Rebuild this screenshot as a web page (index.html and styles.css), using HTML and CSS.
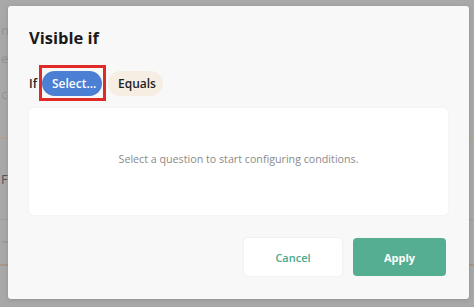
FILE: index.html
```html
<!DOCTYPE html>
<html>
<head>
<meta charset="utf-8">
<link rel="stylesheet" href="styles.css">
</head>
<body>
<div class="page">
  <div class="bg-row bg-r1"><span class="bg-text">n</span></div>
  <div class="bg-row bg-r2"><span class="bg-text">e</span></div>
  <div class="bg-row bg-r3"><span class="bg-text">c</span></div>
  <div class="bg-line bg-l1"></div>
  <div class="bg-row bg-r4"><span class="bg-text dark">F</span></div>
  <div class="bg-line bg-l2"></div>
  <div class="bg-row bg-r5"><span class="bg-text">~</span></div>
  <div class="bg-line bg-l3"></div>
</div>
<div class="modal">
  <h1 class="title">Visible if</h1>
  <div class="cond-row">
    <span class="if-label">If</span>
    <span class="highlight"><button class="pill pill-select">Select...</button></span>
    <button class="pill pill-equals">Equals</button>
  </div>
  <div class="card">
    <p class="empty">Select a question to start configuring conditions.</p>
  </div>
  <div class="actions">
    <button class="btn btn-cancel">Cancel</button>
    <button class="btn btn-apply">Apply</button>
  </div>
</div>
</body>
</html>
```
FILE: styles.css
```css
* { box-sizing: border-box; }
html, body { margin: 0; padding: 0; }
body {
  width: 474px;
  height: 307px;
  overflow: hidden;
  background: #a8a8a8;
  font-family: "Open Sans", "Noto Sans", sans-serif;
  position: relative;
}
.page { padding-top: 20px; }
.bg-row { height: 36px; display: flex; align-items: center; }
.bg-text { color: #939393; font-size: 13px; margin-left: 1px; }
.bg-text.dark { color: #555; }
.bg-r1 { height: 20px; }
.bg-line { height: 2px; background: #b1a294; }
.bg-l1 { margin-top: 25px; }
.bg-r4 { height: 80px; }
.bg-l2 { background: #9c9c9c; height: 1px; }
.bg-r5 { height: 44px; }
.bg-l3 { background: #a59689; }

.modal {
  position: absolute;
  left: 8px;
  top: 6px;
  width: 461px;
  height: 293px;
  background: #f8f8f8;
  border-radius: 3px;
  box-shadow: 0 1px 4px rgba(0,0,0,0.15);
  padding: 20px 21px 23px 21px;
  display: flex;
  flex-direction: column;
}
.title {
  margin: 0;
  font-size: 16.5px;
  line-height: 24px;
  font-weight: 700;
  color: #1a1a1a;
}
.cond-row {
  margin-top: 15px;
  display: flex;
  align-items: center;
  height: 36px;
}
.if-label {
  font-size: 12px;
  font-weight: 600;
  color: #222;
  margin-right: 2px;
}
.highlight {
  display: inline-flex;
  border: 3px solid #e02a26;
  padding: 3px 1px 2px 0;
  margin-right: 2px;
}
.pill {
  border: none;
  font-family: inherit;
  font-size: 12px;
  font-weight: 600;
  height: 25px;
  border-radius: 13px;
  padding: 0 10px;
  line-height: 25px;
}
.pill-select { background: #4a7fd4; color: #fff; width: 60px; }
.pill-equals { background: #f6eee3; color: #222; width: 55px; }
.card {
  margin-top: 7px;
  height: 107px;
  background: #fff;
  border-radius: 4px;
  box-shadow: 0 0 1px rgba(0,0,0,0.12);
  display: flex;
  align-items: center;
  justify-content: center;
  padding-bottom: 5px;
}
.empty {
  margin: 0;
  font-size: 10.7px;
  color: #8a8a8a;
}
.actions {
  margin-top: auto;
  display: flex;
  justify-content: flex-end;
  gap: 11px;
  padding-right: 2px;
}
.btn {
  height: 38px;
  border: none;
  border-radius: 4px;
  font-family: inherit;
  font-size: 11px;
  font-weight: 600;
}
.btn-cancel {
  width: 98px;
  background: #fff;
  color: #4fa88a;
  box-shadow: 0 0 2px rgba(0,0,0,0.1);
}
.btn-apply {
  width: 93px;
  background: #55ae91;
  color: #fff;
  font-weight: 700;
}
```
